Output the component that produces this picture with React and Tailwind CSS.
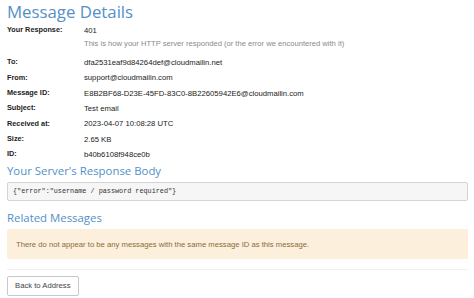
import React from 'react';

const rows = [
  ['To:', 'dfa2531eaf9d84264def@cloudmailin.net'],
  ['From:', 'support@cloudmailin.com'],
  ['Message ID:', 'E8B2BF68-D23E-45FD-83C0-8B22605942E6@cloudmailin.com'],
  ['Subject:', 'Test email'],
  ['Received at:', '2023-04-07 10:08:28 UTC'],
  ['Size:', '2.65 KB'],
  ['ID:', 'b40b6108f948ce0b'],
];

function Row({ label, children }) {
  return (
    <div className="flex items-center h-[15.3px]">
      <div className="w-[77px] font-bold text-[7.3px] text-[#222]">{label}</div>
      <div className="text-[#222]">{children}</div>
    </div>
  );
}

export default function App() {
  return (
    <div className="bg-white w-[474px] h-[298px] overflow-hidden pl-[7px] pr-[6px] text-[7.7px] font-['Liberation_Sans',Arial,sans-serif]">
      <h1 className="font-['Open_Sans',sans-serif] text-[16.8px] leading-[22px] text-[#5390c8] pt-[1px]">
        Message Details
      </h1>

      <Row label="Your Response:">401</Row>
      <div className="pl-[77px] text-[7.6px] leading-[11px] h-[11px] text-[#8a8a8a]">
        This is how your HTTP server responded (or the error we encountered with it)
      </div>

      <div className="mt-[6px]">
        {rows.map(([label, value]) => (
          <Row key={label} label={label}>
            {value}
          </Row>
        ))}
      </div>

      <h2 className="font-['Open_Sans',sans-serif] text-[11.4px] leading-[18px] text-[#5390c8]">
        Your Server's Response Body
      </h2>
      <pre className="mt-[2px] h-[19px] border border-[#d4d4d4] bg-[#f6f6f7] rounded-[2px] px-[5px] text-[6.8px] leading-[17px] text-[#333] font-['Liberation_Mono','DejaVu_Sans_Mono',monospace]">
        {'{"error":"username / password required"}'}
      </pre>

      <h2 className="font-['Open_Sans',sans-serif] text-[11.4px] leading-[18px] text-[#5390c8] mt-[8px]">
        Related Messages
      </h2>
      <div className="mt-[2px] h-[30px] bg-[#fcefdc] rounded-[2px] flex items-center px-[9px] text-[#8a6d3b]">
        There do not appear to be any messages with the same message ID as this message.
      </div>

      <hr className="mt-[10px] border-t border-[#f0f0f0]" />

      <button className="mt-[6px] h-[20px] px-[7px] border border-[#c8c8c8] rounded-[2px] bg-white text-[#444] leading-[18px]">
        Back to Address
      </button>
    </div>
  );
}
